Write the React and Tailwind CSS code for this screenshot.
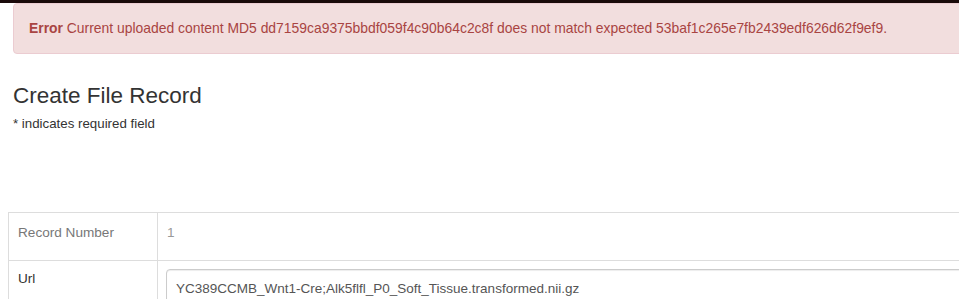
export default function App() {
  return (
    <div className="w-[959px] h-[299px] overflow-hidden bg-white" style={{ fontFamily: '"Liberation Sans", Arial, sans-serif' }}>
      <div className="h-[3px] bg-[#1a0a0a]" />
      <div className="ml-[13px] w-[1000px] h-[51px] border border-[#ebccd1] bg-[#f2dede] rounded-[4px] pl-[15px] flex items-center text-[13.9px] text-[#a94442] whitespace-nowrap">
        <span><b>Error</b> Current uploaded content MD5 dd7159ca9375bbdf059f4c90b64c2c8f does not match expected 53baf1c265e7fb2439edf626d62f9ef9.</span>
      </div>
      <div className="ml-[13px] mt-[29px]">
        <h3 className="text-[22.5px] leading-[26px] text-[#333] m-0">Create File Record</h3>
        <p className="text-[13.3px] leading-[18px] text-[#333] mt-[6px]">* indicates required field</p>
      </div>
      <div className="ml-[8px] mt-[79px] w-[1000px] border-t border-l border-[#dddddd]">
        <div className="flex h-[48px] border-b border-[#dddddd]">
          <div className="w-[149px] shrink-0 border-r border-[#dddddd] pl-[9px] pt-[10px] text-[13.6px] text-[#777]">Record Number</div>
          <div className="flex-1 pl-[9px] pt-[10px] text-[13.6px] text-[#999]">1</div>
        </div>
        <div className="flex h-[48px]">
          <div className="w-[149px] shrink-0 border-r border-[#dddddd] pl-[9px] pt-[8px] text-[13.6px] text-[#333]">Url</div>
          <div className="flex-1 pl-[8px] pt-[8px]">
            <div className="h-[34px] border border-[#cccccc] rounded-[4px] shadow-[inset_0_1px_1px_rgba(0,0,0,0.075)] pl-[9px] pt-[9px] text-[13.5px] text-[#555] whitespace-nowrap">
              YC389CCMB_Wnt1-Cre;Alk5flfl_P0_Soft_Tissue.transformed.nii.gz
            </div>
          </div>
        </div>
      </div>
    </div>
  );
}
